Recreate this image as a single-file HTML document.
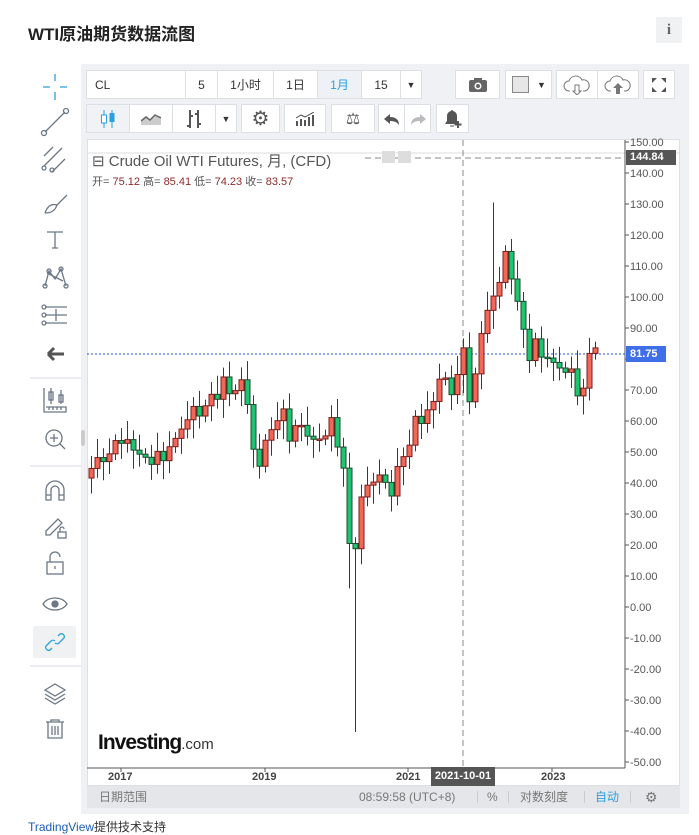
<!DOCTYPE html>
<html><head><meta charset="utf-8">
<style>
*{margin:0;padding:0;box-sizing:border-box}
body{width:699px;height:830px;background:#fff;font-family:"Liberation Sans","Noto Sans CJK SC",sans-serif;position:relative;overflow:hidden;color:#333}
.abs{position:absolute}
.btn{position:absolute;background:#fff;border:1px solid #dcdfe4;font-size:12px;color:#333;display:flex;align-items:center;justify-content:center}
.ax{position:absolute;left:630px;font-size:11px;color:#555}
.tl{position:absolute;font-size:11px;color:#444;font-weight:bold}
</style></head><body>
<div class="abs" style="left:28px;top:20px;font-size:17px;font-weight:bold;color:#222">WTI原油期货数据流图</div>
<div class="abs" style="left:656px;top:17px;width:26px;height:26px;background:#f0f1f3;color:#666;font-size:15px;font-weight:bold;text-align:center;line-height:26px;font-family:'Liberation Serif',serif">i</div>

<div class="abs" style="left:81px;top:64px;width:608px;height:750px;background:#f0f1f4"></div>
<div class="btn" style="left:86px;top:70px;width:100px;height:29px;justify-content:flex-start;padding-left:8px">CL</div>
<div class="btn" style="left:185px;top:70px;width:33px;height:29px">5</div>
<div class="btn" style="left:217px;top:70px;width:57px;height:29px">1小时</div>
<div class="btn" style="left:273px;top:70px;width:45px;height:29px">1日</div>
<div class="btn" style="left:317px;top:70px;width:45px;height:29px;background:#eef2f6;color:#2aa0e0">1月</div>
<div class="btn" style="left:361px;top:70px;width:40px;height:29px">15</div>
<div class="btn" style="left:400px;top:70px;width:22px;height:29px;font-size:9px">▼</div>
<div class="btn" style="left:455px;top:70px;width:45px;height:29px"><svg width="20" height="16"><rect x="1" y="3" width="18" height="12" rx="2" fill="#666"/><rect x="6" y="1" width="8" height="3" fill="#666"/><circle cx="10" cy="9" r="3.5" fill="#fff"/><circle cx="10" cy="9" r="2" fill="#666"/></svg></div>
<div class="btn" style="left:505px;top:70px;width:47px;height:29px;justify-content:flex-start;padding-left:6px"><span style="width:17px;height:17px;background:#e6e6e6;border:1px solid #888;display:inline-block"></span><span style="font-size:9px;margin-left:8px">▼</span></div>
<div class="btn" style="left:556px;top:70px;width:42px;height:29px"><svg width="28" height="20"><path d="M7 16h-1a5 5 0 0 1 0-10a7 7 0 0 1 13 -1a5 5 0 0 1 3 11h-2" fill="none" stroke="#777"/><path d="M12 10v6h-2l4 4l4-4h-2v-6z" fill="#fff" stroke="#777"/></svg></div>
<div class="btn" style="left:597px;top:70px;width:42px;height:29px"><svg width="28" height="20"><path d="M7 16h-1a5 5 0 0 1 0-10a7 7 0 0 1 13 -1a5 5 0 0 1 3 11h-2" fill="none" stroke="#777"/><path d="M12 19v-6h-3l5-5l5 5h-3v6z" fill="#777"/></svg></div>
<div class="btn" style="left:643px;top:70px;width:32px;height:29px"><svg width="18" height="18" fill="#555"><path d="M2 2h5l-5 5zM16 2h-5l5 5zM2 16h5l-5-5zM16 16h-5l5-5z"/></svg></div>
<div class="btn" style="left:86px;top:104px;width:44px;height:29px;background:#f0f2f5"><svg width="16" height="22"><path d="M4 2v18M12 2v18" stroke="#2aa0e0"/><rect x="1.5" y="7" width="5" height="8" fill="#fff" stroke="#2aa0e0"/><rect x="9.5" y="5" width="5" height="9" fill="#2aa0e0"/></svg></div>
<div class="btn" style="left:129px;top:104px;width:44px;height:29px"><svg width="20" height="12"><path d="M0 12V8l5-4 4 3 5-5 6 3v7z" fill="#ccc"/><path d="M0 8l5-4 4 3 5-5 6 3" fill="none" stroke="#666" stroke-width="1.5"/></svg></div>
<div class="btn" style="left:172px;top:104px;width:44px;height:29px"><svg width="16" height="22" stroke="#555" stroke-width="2" fill="none"><path d="M4 2v18M1 18h3M4 8h3M12 2v18M9 6h3M12 16h3"/></svg></div>
<div class="btn" style="left:215px;top:104px;width:22px;height:29px;font-size:9px">▼</div>
<div class="btn" style="left:241px;top:104px;width:39px;height:29px;font-size:20px;color:#555">⚙</div>
<div class="btn" style="left:284px;top:104px;width:42px;height:29px"><svg width="18" height="14" fill="#555"><rect x="0" y="9" width="2" height="5"/><rect x="4" y="7" width="2" height="7"/><rect x="8" y="8" width="2" height="6"/><rect x="12" y="5" width="2" height="9"/><rect x="16" y="3" width="2" height="11"/><path d="M0 6l5-3 4 2 9-5" stroke="#555" fill="none"/></svg></div>
<div class="btn" style="left:331px;top:104px;width:44px;height:29px;font-size:16px;color:#555">⚖</div>
<div class="btn" style="left:378px;top:104px;width:27px;height:29px"><svg width="16" height="12"><path d="M6 1L0 6l6 5V8c4 0 7 1 9 4c0-5-3-8-9-8z" fill="#555"/></svg></div>
<div class="btn" style="left:404px;top:104px;width:27px;height:29px"><svg width="16" height="12"><path d="M10 1l6 5-6 5V8c-4 0-7 1-9 4c0-5 3-8 9-8z" fill="#bbb"/></svg></div>
<div class="btn" style="left:436px;top:104px;width:33px;height:29px"><svg width="20" height="20"><path d="M8 2a1 1 0 0 1 2 0a5 5 0 0 1 4 5v5l2 3H2l2-3V7a5 5 0 0 1 4-5z" fill="#555"/><path d="M7 17h4" stroke="#555"/><path d="M15 12v7M11.5 15.5h7" stroke="#555" stroke-width="2"/></svg></div>

<div class="abs" style="left:87px;top:139px;width:593px;height:647px;background:#fff;border:1px solid #dcdfe4"></div>
<svg class="abs" style="left:0;top:0" width="699" height="830" id="ch">
<line x1="87" y1="153" x2="680" y2="153" stroke="#ddd"/>
<line x1="625" y1="140" x2="625" y2="768" stroke="#555"/>
<line x1="87" y1="768" x2="625" y2="768" stroke="#555"/>
<line x1="463" y1="140" x2="463" y2="768" stroke="#888" stroke-dasharray="6,4"/>
<line x1="365" y1="158" x2="625" y2="158" stroke="#888" stroke-dasharray="6,4"/>
<line x1="87" y1="354" x2="625" y2="354" stroke="#2050e0" stroke-dasharray="2,2"/>
<g id="cd"></g>
<g id="tk"></g>
</svg>
<div class="abs" style="left:92px;top:150px;font-size:15px;color:#555">⊟ Crude Oil WTI Futures, 月, (CFD)</div>
<div class="abs" style="left:382px;top:151px;width:13px;height:12px;background:#ddd"></div>
<div class="abs" style="left:398px;top:151px;width:13px;height:12px;background:#ddd"></div>
<div class="abs" style="left:92px;top:173px;font-size:11px;color:#555">开= <span style="color:#8b2c2c">75.12</span> 高= <span style="color:#8b2c2c">85.41</span> 低= <span style="color:#8b2c2c">74.23</span> 收= <span style="color:#8b2c2c">83.57</span></div>
<div id="axl"></div>
<div class="abs" style="left:626px;top:150px;width:50px;height:15px;background:#555;color:#fff;font-size:11px;font-weight:bold;padding-left:4px;line-height:15px">144.84</div>
<div class="abs" style="left:626px;top:346px;width:40px;height:16px;background:#3e6fe8;color:#fff;font-size:11px;font-weight:bold;padding-left:4px;line-height:16px">81.75</div>
<div class="abs" style="left:98px;top:731px;font-size:21px;font-weight:bold;color:#111;letter-spacing:-1px">Investing<span style="font-size:15px;font-weight:normal;color:#333;letter-spacing:0">.com</span></div>
<div class="tl" style="left:108px;top:771px">2017</div>
<div class="tl" style="left:252px;top:771px">2019</div>
<div class="tl" style="left:396px;top:771px">2021</div>
<div class="tl" style="left:541px;top:771px">2023</div>
<div class="abs" style="left:431px;top:767px;width:64px;height:19px;background:#555;color:#fff;font-size:11px;font-weight:bold;text-align:center;line-height:19px">2021-10-01</div>
<div class="abs" style="left:87px;top:786px;width:593px;height:22px;background:#e5e6e9;font-size:12px;color:#777;line-height:22px">
<span class="abs" style="left:12px">日期范围</span>
<span class="abs" style="left:272px">08:59:58 (UTC+8)</span>
<span class="abs" style="left:400px">%</span>
<span class="abs" style="left:433px">对数刻度</span>
<span class="abs" style="left:508px;color:#2aa0e0">自动</span>
<span class="abs" style="left:558px;font-size:14px">⚙</span>
<span class="abs" style="left:390px;top:5px;width:1px;height:12px;background:#ccc"></span>
<span class="abs" style="left:421px;top:5px;width:1px;height:12px;background:#ccc"></span>
<span class="abs" style="left:497px;top:5px;width:1px;height:12px;background:#ccc"></span>
<span class="abs" style="left:543px;top:5px;width:1px;height:12px;background:#ccc"></span>
</div>
<div class="abs" style="left:28px;top:818px;font-size:12px;color:#333"><span style="color:#1a5fb4">TradingView</span>提供技术支持</div>

<svg class="abs" style="left:30px;top:70px" width="52" height="680" fill="none" stroke="#6b7785" stroke-width="1.3">
<path d="M13 17h7M30 17h7M25 4v7M25 22v8" stroke="#2aa0e0"/>
<path d="M15 62l20-20"/><circle cx="14" cy="63" r="2.5"/><circle cx="36" cy="41" r="2.5"/>
<path d="M14 86l9-9M14 96l18-18M22 102l13-13"/><circle cx="14" cy="98" r="2"/><circle cx="22" cy="100" r="2"/>
<path d="M15 143c2-6 6-10 12-8l10-10M15 143c6 0 10-2 12-8"/>
<path d="M17 162h16M25 162v16M22 178h6"/>
<path d="M15 216l4-15 6 8 6-10 5 17M17 203l16 8"/><circle cx="15" cy="216" r="2"/><circle cx="36" cy="216" r="2"/><circle cx="19" cy="201" r="2"/><circle cx="31" cy="199" r="2"/>
<path d="M15 237h22M15 245h22M15 253h22M26 239v12"/><circle cx="14" cy="237" r="2"/><circle cx="14" cy="245" r="2"/><circle cx="14" cy="253" r="2"/>
<path d="M18 284h16M18 284l6-6M18 284l6 6" stroke="#555" stroke-width="3"/>
<path d="M0 308h52M0 396h52M0 596h52" stroke="#dde1e6"/>
<path d="M14 318v24h22v-5h-20M19 337v3M23 337v3M27 337v3M31 337v3"/><rect x="19" y="322" width="4" height="8"/><rect x="29" y="325" width="4" height="7"/><path d="M21 318v16M31 320v14"/>
<circle cx="24" cy="368" r="8"/><path d="M30 374l5 5M20 368h8M24 364v8"/>
<path d="M16 430v-10a9 9 0 0 1 18 0v10h-5v-10a4 4 0 0 0-8 0v10zM16 425h5M29 425h5"/>
<path d="M16 461l12-12 4 4-12 12h-4z"/><rect x="28" y="462" width="8" height="6"/><path d="M30 462v-3a2 2 0 0 1 4 0"/>
<rect x="17" y="492" width="16" height="12"/><path d="M20 492v-5a5 5 0 0 1 10 0M25 496v3"/>
<path d="M13 534c5-8 19-8 24 0c-5 8-19 8-24 0z"/><circle cx="25" cy="534" r="3" fill="#6b7785"/>
<rect x="3" y="556" width="43" height="32" rx="2" fill="#f0f1f3" stroke="none"/>
<path d="M22 578l-2 2a3 3 0 0 1-4-4l5-5a3 3 0 0 1 4 0M28 566l2-2a3 3 0 0 1 4 4l-5 5a3 3 0 0 1-4 0" stroke="#2aa0e0"/>
<path d="M15 620l10-6 10 6-10 6zM15 624l10 6 10-6M15 628l10 6 10-6"/>
<path d="M16 652h18M21 652v-2h8v2M18 652v16h14v-16M22 656v9M25 656v9M28 656v9"/>
</svg>
<div class="abs" style="left:81px;top:430px;width:4px;height:16px;background:#ccc;border-radius:2px"></div>

<script>
var cl=[41.6,44.7,48.2,46.9,49.4,53.7,
52.8,54.0,50.6,49.3,48.3,46.0,50.2,47.2,51.7,54.4,57.4,60.4,
64.7,61.6,64.9,68.6,67.0,74.2,68.8,69.8,73.3,65.3,50.9,45.4,
53.8,57.2,60.1,63.9,53.5,58.5,58.6,55.1,54.1,54.2,55.2,61.1,
51.6,44.8,20.5,18.8,35.5,39.3,40.3,42.6,40.2,35.8,45.3,48.5,
52.2,61.5,59.2,63.6,66.3,73.5,73.9,68.5,75.0,83.6,66.2,75.2,
88.2,95.7,100.3,104.7,114.7,105.8,98.6,89.6,79.5,86.5,80.6,80.3,
78.9,77.1,75.7,76.8,68.1,70.6,81.8,83.6];
var Y=function(p){return 607-3.1*p};
var s='',o=39;
for(var i=0;i<cl.length;i++){
 var c=cl[i],x=463-(63-i)*6;
 var hi=Math.max(o,c)+2+((i*7)%5),lo=Math.min(o,c)-2-((i*3)%5);
 if(i==45)lo=-40.3; if(i==68)hi=130.5; if(i==44)lo=6; if(i==86)hi=85.4;
 var up=c>=o,col=up?'#f26757':'#1ec46f',bc=up?'#7a1c1c':'#1b4a2c';
 if(x<88){o=c;continue;}
 s+='<line x1="'+(x+0.5)+'" x2="'+(x+0.5)+'" y1="'+Y(hi)+'" y2="'+Y(lo)+'" stroke="#1b4a2c"/>';
 var t=Y(Math.max(o,c)),h=Math.max(1.5,Math.abs(Y(o)-Y(c)));
 s+='<rect x="'+(x-2)+'" y="'+t+'" width="5" height="'+h+'" fill="'+col+'" stroke="'+bc+'"/>';
 o=c;
}
document.getElementById('cd').innerHTML=s;
var a='',tk='';
for(var p=150;p>=-50;p-=10){var y=Y(p);
 tk+='<line x1="625" x2="629" y1="'+y+'" y2="'+y+'" stroke="#555"/>';
 if(p==80)continue;
 a+='<div class="ax" style="top:'+(y-5)+'px">'+p.toFixed(2)+'</div>';}
[121,265,408,552].forEach(function(x){tk+='<line x1="'+x+'" x2="'+x+'" y1="768" y2="772" stroke="#555"/>'});
document.getElementById('tk').innerHTML=tk;
document.getElementById('axl').innerHTML=a;
</script>
</body></html>
